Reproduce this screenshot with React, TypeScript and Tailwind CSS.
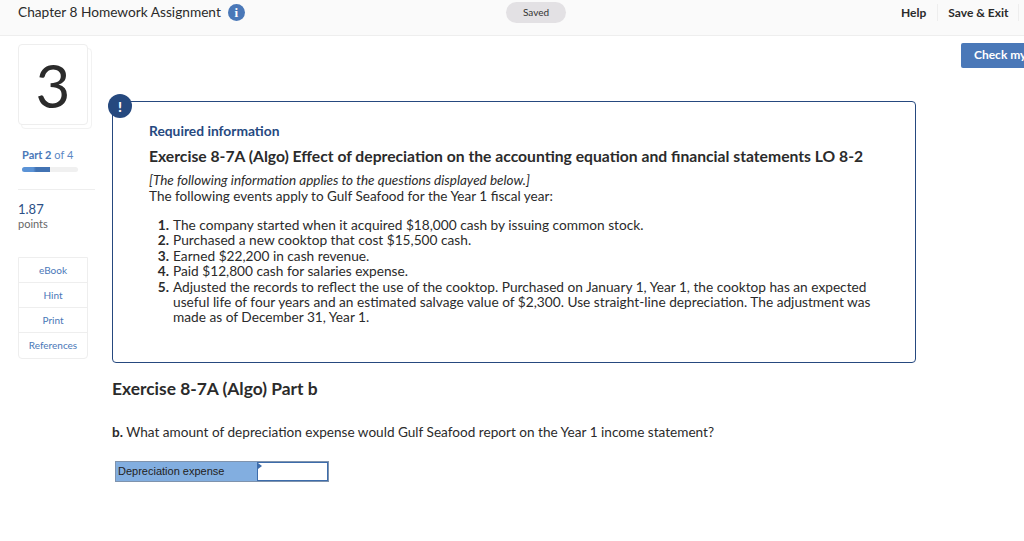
const tools = ['eBook', 'Hint', 'Print', 'References'];

const events = [
  'The company started when it acquired $18,000 cash by issuing common stock.',
  'Purchased a new cooktop that cost $15,500 cash.',
  'Earned $22,200 in cash revenue.',
  'Paid $12,800 cash for salaries expense.',
  'Adjusted the records to reflect the use of the cooktop. Purchased on January 1, Year 1, the cooktop has an expected useful life of four years and an estimated salvage value of $2,300. Use straight-line depreciation. The adjustment was made as of December 31, Year 1.',
];

function Header() {
  return (
    <header className="flex h-[36px] items-start border-b border-[#eeeeee] bg-[#fafafa] pl-[18px] pt-[2px]">
      <div className="flex h-[21px] w-[488px] items-center gap-[7px]">
        <span className="text-[13.7px] text-[#2b2b2b]">Chapter 8 Homework Assignment</span>
        <span className="flex h-[17px] w-[17px] items-center justify-center rounded-full bg-[#4a78b8] font-['Liberation_Serif',serif] text-[13px] font-bold leading-none text-white">i</span>
      </div>
      <div className="flex h-[21px] w-[60px] items-center justify-center rounded-full bg-[#e3e1e4] text-[10px] text-[#333333]">Saved</div>
      <div className="ml-[335px] flex h-[21px] items-center text-[12px] font-bold text-[#2b2b2b]">Help</div>
      <div className="ml-[11px] mt-[2px] flex h-[17px] items-center border-x border-[#eeeeee] px-[10px] text-[12px] font-bold text-[#2b2b2b]">Save &amp; Exit</div>
    </header>
  );
}

function Sidebar() {
  return (
    <aside className="w-[94px] shrink-0 pl-[18px] pt-[8px]">
      <div className="relative h-[81px] w-[70px]">
        <div className="absolute left-[3px] top-[4px] h-[81px] w-[71px] rounded-[4px] border border-[#f2f2f2] bg-white" />
        <div className="relative flex h-[81px] w-[70px] items-center justify-center rounded-[4px] border border-[#eeeeee] bg-white text-[60px] font-normal leading-none text-[#2b2b2b]">3</div>
      </div>
      <div className="mt-[23px] pl-[4px] text-[11px] leading-[14px] text-[#5b87c4]">
        <span className="font-bold text-[#4a78b8]">Part 2</span> of 4
      </div>
      <div className="ml-[4px] mt-[5px] h-[5px] w-[56px] rounded-full bg-[#f0f0f0]">
        <div className="h-[5px] w-[28px] rounded-l-full bg-linear-to-r from-[#5b93d6] from-40% to-[#4273b3] to-50%" />
      </div>
      <div className="mt-[17px] w-[77px] border-t border-[#eeeeee]" />
      <div className="mt-[11px] text-[13px] leading-[16px] text-[#2c4f86]">1.87</div>
      <div className="text-[11px] leading-[14px] text-[#666666]">points</div>
      <div className="mt-[26px] w-[70px] rounded-b-[4px] border border-[#eeeeee]">
        {tools.map((t) => (
          <div key={t} className="flex h-[25px] items-center justify-center border-b border-[#eeeeee] text-[10px] text-[#4a78b8] last:border-b-0">{t}</div>
        ))}
      </div>
    </aside>
  );
}

function InfoBox() {
  return (
    <section className="relative h-[262px] w-[804px] rounded-[4px] border border-[#26497f] pl-[36px] pt-[20px] text-[#2b2b2b]">
      <div className="absolute -left-[5px] -top-[8px] flex h-[24px] w-[24px] items-center justify-center rounded-full bg-[#26497f] text-[14px] font-black text-white">!</div>
      <h3 className="text-[13.8px] font-bold leading-[18px] text-[#26497f]">Required information</h3>
      <h2 className="mt-[7px] text-[15.7px] font-bold leading-[18px]">Exercise 8-7A (Algo) Effect of depreciation on the accounting equation and financial statements LO 8-2</h2>
      <p className="mt-[8px] text-[13.5px] italic leading-[15px]">[The following information applies to the questions displayed below.]</p>
      <p className="text-[13.55px] leading-[16px]">The following events apply to Gulf Seafood for the Year 1 fiscal year:</p>
      <ol className="mt-[13px] w-[724px] text-[13.7px] leading-[15.4px]">
        {events.map((e, i) => (
          <li key={i} className="flex">
            <span className="w-[24px] shrink-0 pr-[4px] text-right font-bold">{i + 1}.</span>
            <span>{e}</span>
          </li>
        ))}
      </ol>
    </section>
  );
}

export default function App() {
  return (
    <div className="h-[541px] w-[1024px] overflow-hidden bg-white font-['Lato',sans-serif]">
      <Header />
      <div className="flex">
        <Sidebar />
        <main className="ml-[18px] w-[804px] shrink-0 pt-[65px]">
          <InfoBox />
          <h2 className="mt-[16px] text-[17.4px] font-bold leading-[20px] text-[#2b2b2b]">Exercise 8-7A (Algo) Part b</h2>
          <p className="mt-[24px] text-[13.6px] leading-[18px] text-[#2b2b2b]"><b>b.</b> What amount of depreciation expense would Gulf Seafood report on the Year 1 income statement?</p>
          <div className="ml-[3px] mt-[20px] flex h-[21px] w-[214px] border border-[#7f93ad]">
            <div className="flex w-[141px] items-center bg-[#82aee0] pl-[2px] font-['Liberation_Sans',sans-serif] text-[11px] text-[#222222]">Depreciation expense</div>
            <div className="relative flex-1 border border-[#3d6cab] bg-white">
              <div className="absolute left-0 top-0 h-0 w-0 border-y-[3px] border-l-[4px] border-y-transparent border-l-[#3d6cab]" />
            </div>
          </div>
        </main>
        <div className="ml-[45px] shrink-0 pt-[7px]">
          <div className="flex h-[25px] w-[100px] items-center whitespace-nowrap rounded-[2px] bg-[#4a78b8] pb-[1px] pl-[13px] text-[12px] font-bold text-white">Check my work</div>
        </div>
      </div>
    </div>
  );
}
